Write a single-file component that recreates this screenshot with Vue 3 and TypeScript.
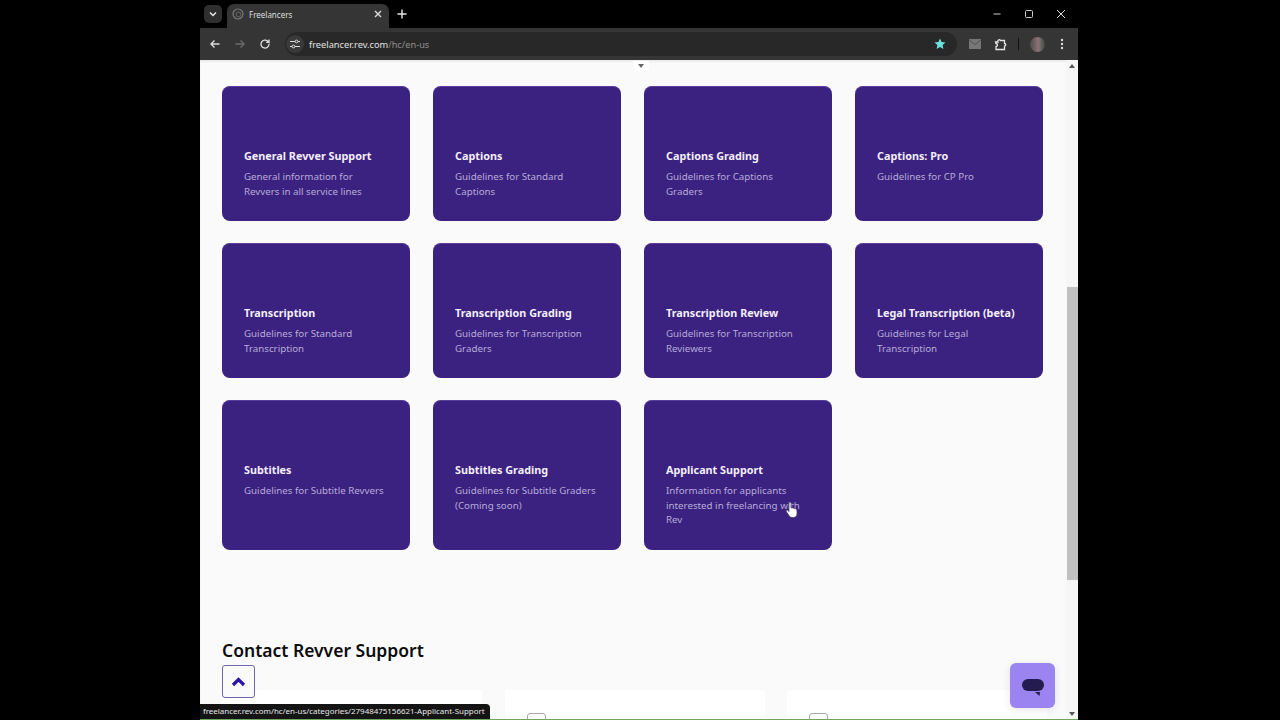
<template>
  <div class="screen">
    <div class="window">
      <div class="tabstrip">
        <button class="tab-search">
          <svg width="10" height="10" viewBox="0 0 10 10"><path d="M2 3.500 5 6.500 8 3.500" fill="none" stroke="#e8e8e8" stroke-width="1.500" /></svg>
        </button>
        <div class="tab">
          <svg width="12" height="12" viewBox="0 0 12 12"><circle cx="6" cy="6" r="5" fill="none" stroke="#777" stroke-width="1.200" /><circle cx="6.500" cy="6.500" r="2.400" fill="none" stroke="#666" stroke-width="1" /></svg>
          <span class="tab-title">Freelancers</span>
          <svg class="tab-close" width="10" height="10" viewBox="0 0 10 10"><path d="M2 2 8 8M8 2 2 8" stroke="#ddd" stroke-width="1.400" /></svg>
        </div>
        <svg class="new-tab" width="10" height="10" viewBox="0 0 10 10"><path d="M5 0.500V9.500M0.500 5H9.500" stroke="#e8e8e8" stroke-width="1.400" /></svg>
        <div class="window-controls">
          <svg width="10" height="10" viewBox="0 0 10 10"><path d="M1.500 5H8.500" stroke="#ccc" stroke-width="1" /></svg>
          <svg width="10" height="10" viewBox="0 0 10 10"><rect x="1.500" y="1.500" width="7" height="7" rx="1" fill="none" stroke="#ccc" stroke-width="1" /></svg>
          <svg width="10" height="10" viewBox="0 0 10 10"><path d="M1 1 9 9M9 1 1 9" stroke="#ddd" stroke-width="1" /></svg>
        </div>
      </div>

      <div class="toolbar">
        <svg width="12" height="12" viewBox="0 0 12 12"><path d="M10.500 6H2M5.500 2.500 2 6l3.500 3.500" fill="none" stroke="#ddd" stroke-width="1.400" /></svg>
        <svg width="12" height="12" viewBox="0 0 12 12"><path d="M1.500 6H10M6.500 2.500 10 6 6.500 9.500" fill="none" stroke="#6a6a6a" stroke-width="1.400" /></svg>
        <svg width="12" height="12" viewBox="0 0 12 12"><path d="M10 6a4 4 0 1 1-1.200-2.800L10 4.400V1.500M10 4.400H7.200" fill="none" stroke="#ddd" stroke-width="1.300" /></svg>
        <div class="omnibox">
          <span class="site-icon">
            <svg width="12" height="12" viewBox="0 0 12 12"><path d="M1 3.500H6M9 3.500H11M1 8.500H3M6 8.500H11" stroke="#ddd" stroke-width="1.200" /><circle cx="7.500" cy="3.500" r="1.400" fill="none" stroke="#ddd" /><circle cx="4.500" cy="8.500" r="1.400" fill="none" stroke="#ddd" /></svg>
          </span>
          <span class="url">freelancer.rev.com<span class="url-path">/hc/en-us</span></span>
          <svg class="star" width="12" height="12" viewBox="0 0 12 12"><path d="M6 .6 7.600 4.100l3.900.4-2.900 2.600.8 3.800L6 9l-3.400 1.900.8-3.800L.5 4.500l3.900-.4z" fill="#6fe0e0" /></svg>
        </div>
        <div class="tool-icons">
          <svg class="mail" width="12" height="10" viewBox="0 0 12 10"><rect width="12" height="10" fill="#777" /><path d="M0 1 6 5.500 12 1" fill="none" stroke="#555" /></svg>
          <svg class="extension" width="13" height="13" viewBox="0 0 13 13"><path d="M1.500 4H4a1.200 1.200 0 0 1 2.400-1.500V2.500H10.500V5.500a1.300 1.300 0 0 1 0 2.600V11.500H2V8.500a1.500 1.500 0 0 0 0-3z" fill="none" stroke="#e6e6e6" stroke-width="1.300" /></svg>
          <span class="divider"></span>
          <span class="avatar"></span>
          <svg class="menu-dots" width="4" height="12" viewBox="0 0 4 12"><circle cx="2" cy="2" r="1.200" fill="#ddd" /><circle cx="2" cy="6" r="1.200" fill="#ddd" /><circle cx="2" cy="10" r="1.200" fill="#ddd" /></svg>
        </div>
      </div>

      <div class="viewport">
        <main class="page">
          <span class="top-notch"></span>
          <section class="card-grid">
            <a v-for="card in cards" :key="card.title" class="card">
              <h3>{{ card.title }}</h3>
              <p>{{ card.text }}</p>
            </a>
          </section>

          <h2 class="contact-heading">Contact Revver Support</h2>

          <section class="contact-row">
            <div class="contact-card"></div>
            <div class="contact-card">
              <span class="contact-icon"></span>
            </div>
            <div class="contact-card">
              <span class="contact-icon"></span>
            </div>
          </section>
        </main>

        <div class="scrollbar">
          <span class="arrow-up"></span>
          <span class="thumb"></span>
          <span class="arrow-down"></span>
        </div>

        <button class="back-top">
          <svg width="15" height="11" viewBox="0 0 15 11"><path d="M2 9 7.500 3.500 13 9" fill="none" stroke="#2c14a8" stroke-width="3.200" /></svg>
        </button>

        <button class="chat">
          <svg width="24" height="20" viewBox="0 0 24 20"><rect x="0" y="0" width="22" height="12" rx="6" fill="#241c4e" /><path d="M13 13h5l-.5 4z" fill="#241c4e" /></svg>
        </button>

        <div class="status-link">freelancer.rev.com/hc/en-us/categories/27948475156621-Applicant-Support</div>

        <svg class="cursor" width="14" height="18" viewBox="0 0 14 18">
          <path d="M4 1.500c1-.8 2-.2 2 1V7l1-.3 1 .3 1 .3 1.500.5c1 .5 1.500 1 1.500 2.200v3c0 2-1.500 3.500-3.500 3.500H7c-1.500 0-2.500-1-3.200-2.200L1.300 10.500c-.5-1 .8-2 1.700-1.200L4 10.500z" fill="#fff" stroke="#3a3550" stroke-width=".7" />
        </svg>
      </div>
      <div class="green-edge"></div>
    </div>
  </div>
</template>

<script setup lang="ts">
interface HelpCard {
  title: string
  text: string
}

const cards: HelpCard[] = [
  { title: 'General Revver Support', text: 'General information for Revvers in all service lines' },
  { title: 'Captions', text: 'Guidelines for Standard Captions' },
  { title: 'Captions Grading', text: 'Guidelines for Captions Graders' },
  { title: 'Captions: Pro', text: 'Guidelines for CP Pro' },
  { title: 'Transcription', text: 'Guidelines for Standard Transcription' },
  { title: 'Transcription Grading', text: 'Guidelines for Transcription Graders' },
  { title: 'Transcription Review', text: 'Guidelines for Transcription Reviewers' },
  { title: 'Legal Transcription (beta)', text: 'Guidelines for Legal Transcription' },
  { title: 'Subtitles', text: 'Guidelines for Subtitle Revvers' },
  { title: 'Subtitles Grading', text: 'Guidelines for Subtitle Graders (Coming soon)' },
  { title: 'Applicant Support', text: 'Information for applicants interested in freelancing with Rev' }
]
</script>

<style>
html,
body {
  margin: 0;
  background: #000;
}
</style>

<style scoped>
.screen {
  width: 1280px;
  height: 720px;
  background: #000;
  overflow: hidden;
  font-family: "Noto Sans", "Open Sans", sans-serif;
}

.window {
  width: 878px;
  height: 720px;
  margin-left: 200px;
  display: flex;
  flex-direction: column;
}

.tabstrip {
  height: 28px;
  flex-shrink: 0;
  display: flex;
  align-items: flex-end;
  padding-left: 4px;
  background: #000;
}

.tab-search {
  width: 18px;
  height: 18px;
  margin: 0 0 5px 0;
  padding: 0;
  border: none;
  border-radius: 5px;
  background: #2f2f2f;
  display: flex;
  align-items: center;
  justify-content: center;
}

.tab {
  width: 162px;
  height: 24px;
  margin-left: 5px;
  padding: 0 6px 4px 5px;
  box-sizing: border-box;
  background: #353535;
  border-radius: 7px 7px 0 0;
  display: flex;
  align-items: center;
  gap: 5px;
}

.tab-title {
  font-size: 8px;
  color: #dedede;
}

.tab-close {
  margin-left: auto;
}

.new-tab {
  margin: 0 0 9px 8px;
}

.window-controls {
  margin-left: auto;
  height: 28px;
  display: flex;
  align-items: center;
  gap: 22px;
  padding-right: 12px;
}

.toolbar {
  height: 32px;
  flex-shrink: 0;
  display: flex;
  align-items: center;
  gap: 13px;
  padding: 0 10px 0 9px;
  background: #353535;
}

.omnibox {
  width: 672px;
  height: 24px;
  margin-left: 1px;
  padding: 0 11px 0 1px;
  box-sizing: border-box;
  border-radius: 12px;
  background: #282828;
  display: flex;
  align-items: center;
  gap: 5px;
}

.site-icon {
  width: 18px;
  height: 18px;
  border-radius: 50%;
  background: #3a3a3a;
  display: flex;
  align-items: center;
  justify-content: center;
}

.url {
  font-size: 9.250px;
  color: #e2e2e2;
}

.url-path {
  color: #8f8f8f;
}

.star {
  margin-left: auto;
}

.tool-icons {
  display: flex;
  align-items: center;
  margin-left: -1px;
}

.extension {
  margin-left: 13px;
}

.divider {
  width: 1px;
  height: 12px;
  margin-left: 11px;
  background: #111;
}

.avatar {
  width: 15px;
  height: 15px;
  margin-left: 11px;
  border-radius: 50%;
  background: linear-gradient(90deg, #4d4a4a, #8a7478 55%, #3d4a42);
}

.menu-dots {
  margin-left: 15px;
}

.viewport {
  position: relative;
  flex: 1;
  min-height: 0;
  display: flex;
  overflow: hidden;
  background: #fafafb;
}

.page {
  position: relative;
  flex: 1;
  min-width: 0;
  padding: 26px 0 0 22px;
  box-sizing: border-box;
  overflow: hidden;
  box-shadow: inset 0 2px 2px rgba(0, 0, 0, 0.06);
}

.top-notch {
  position: absolute;
  left: 433px;
  top: 1px;
  width: 16px;
  height: 9px;
  background: #fff;
  border-radius: 0 0 3px 3px;
}

.top-notch::after {
  content: "";
  position: absolute;
  left: 5px;
  top: 3px;
  border-left: 3px solid transparent;
  border-right: 3px solid transparent;
  border-top: 4px solid #666;
}

.card-grid {
  width: 822px;
  display: grid;
  grid-template-columns: repeat(4, 188px);
  grid-template-rows: 135px 135px 150px;
  column-gap: 23px;
  row-gap: 22px;
}

.card {
  padding: 61px 22px 0;
  box-sizing: border-box;
  background: #3b2180;
  border-radius: 8px;
  box-shadow: inset 0 1px 0 rgba(120, 90, 180, 0.5);
}

.card h3 {
  margin: 0 0 6px;
  font-size: 10.800px;
  line-height: 17px;
  font-weight: 700;
  color: #f3effa;
}

.card p {
  margin: 0;
  font-size: 9.750px;
  line-height: 14.500px;
  color: #b8abd8;
}

.contact-heading {
  margin: 87px 0 0;
  font-size: 17.500px;
  line-height: 26px;
  font-weight: 600;
  color: #0c0c0c;
}

.contact-row {
  margin-top: 27px;
  display: flex;
  gap: 22.500px;
}

.contact-card {
  width: 260px;
  height: 60px;
  padding-left: 22px;
  box-sizing: border-box;
  background: #fff;
}

.contact-icon {
  display: block;
  width: 19px;
  height: 14px;
  margin-top: 23px;
  border: 1px solid #a8a8a8;
  border-radius: 3px 3px 0 0;
  box-sizing: border-box;
}

.scrollbar {
  width: 11px;
  flex-shrink: 0;
  position: relative;
  background: #f6f6f6;
}

.arrow-up,
.arrow-down {
  position: absolute;
  left: 2px;
  width: 0;
  height: 0;
  border-left: 3.500px solid transparent;
  border-right: 3.500px solid transparent;
}

.arrow-up {
  top: 4px;
  border-bottom: 4px solid #555;
}

.arrow-down {
  bottom: 3px;
  border-top: 4px solid #555;
}

.thumb {
  position: absolute;
  left: 0;
  top: 227px;
  width: 11px;
  height: 293px;
  background: #c1c1c1;
}

.back-top {
  position: absolute;
  left: 22px;
  top: 605px;
  width: 33px;
  height: 33px;
  padding: 0;
  background: #fafafb;
  border: 1px solid #6f66a8;
  border-radius: 3px;
  display: flex;
  align-items: center;
  justify-content: center;
}

.chat {
  position: absolute;
  left: 810px;
  top: 603px;
  width: 45px;
  height: 45px;
  padding: 16px 0 0 12px;
  border: none;
  border-radius: 6px;
  background: #9b83f0;
  box-sizing: border-box;
  display: flex;
  box-shadow: 0 2px 8px rgba(0, 0, 0, 0.1);
}

.status-link {
  position: absolute;
  left: 0;
  bottom: 0;
  height: 15px;
  padding: 0 5px 0 3px;
  border-radius: 0 4px 0 0;
  background: #141414;
  color: #e6e6e6;
  font-size: 7.950px;
  line-height: 15px;
  white-space: nowrap;
}

.cursor {
  position: absolute;
  left: 585px;
  top: 441px;
}

.green-edge {
  height: 1px;
  flex-shrink: 0;
  background: #6aa85a;
}
</style>
